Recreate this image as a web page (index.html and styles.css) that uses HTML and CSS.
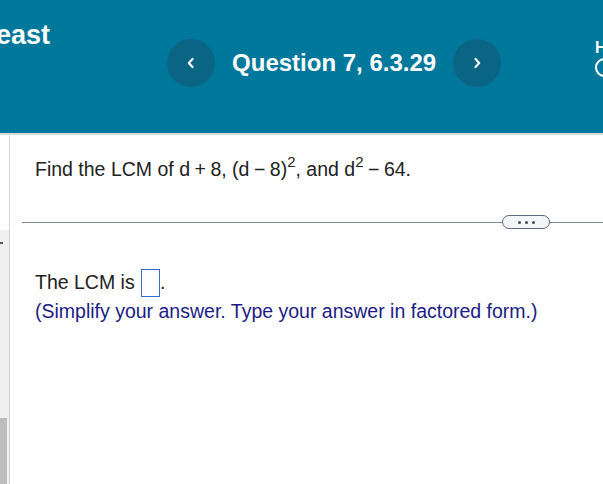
FILE: index.html
```html
<!DOCTYPE html>
<html>
<head>
<meta charset="utf-8">
<link rel="stylesheet" href="styles.css">
</head>
<body>
<header class="header">
  <div class="brand">east</div>
  <nav class="qnav">
    <button class="circle" aria-label="Previous">
      <svg width="14" height="14" viewBox="0 0 14 14"><path d="M8.5 3 L4.8 7 L8.5 11" fill="none" stroke="#fff" stroke-width="2.2" stroke-linecap="round" stroke-linejoin="round"/></svg>
    </button>
    <div class="qtitle">Question 7, 6.3.29</div>
    <button class="circle" aria-label="Next">
      <svg width="14" height="14" viewBox="0 0 14 14"><path d="M5.5 3 L9.2 7 L5.5 11" fill="none" stroke="#fff" stroke-width="2.2" stroke-linecap="round" stroke-linejoin="round"/></svg>
    </button>
  </nav>
  <div class="hright">
    <div class="hw">H</div>
    <div class="ring"></div>
  </div>
</header>
<div class="main">
  <aside class="side">
    <div class="side-top"></div>
    <div class="track">
      <div class="arrow"></div>
      <div class="thumb"></div>
    </div>
  </aside>
  <section class="content">
    <p class="question">Find the LCM of d<span class="op">+</span>8, (d<span class="op">−</span>8)<sup>2</sup>, and d<sup>2</sup><span class="op">−</span>64.</p>
    <div class="divider">
      <span class="line"></span>
      <button class="more" aria-label="More"><i></i><i></i><i></i></button>
      <span class="line tail"></span>
    </div>
    <p class="answer">The LCM is <span class="box"></span>.</p>
    <p class="hint">(Simplify your answer. Type your answer in factored form.)</p>
  </section>
</div>
</body>
</html>
```
FILE: styles.css
```css
html, body {
  margin: 0;
  padding: 0;
  background: #fff;
  font-family: "Liberation Sans", Arial, sans-serif;
  width: 603px;
  height: 484px;
  overflow: hidden;
}

.header {
  height: 133px;
  background: #00789b;
  border-bottom: 2px solid #d6dbe1;
  display: flex;
  align-items: flex-start;
  color: #fff;
}

.brand {
  font-weight: bold;
  font-size: 27px;
  line-height: 30px;
  margin-top: 20px;
  margin-left: -4px;
}

.qnav {
  display: flex;
  align-items: center;
  margin-top: 39px;
  margin-left: 117px;
}

.circle {
  width: 48px;
  height: 48px;
  border-radius: 50%;
  border: none;
  padding: 0;
  background: #0a6484;
  display: flex;
  align-items: center;
  justify-content: center;
}

.qtitle {
  font-weight: bold;
  font-size: 24px;
  margin: 0 17px 0 17px;
  line-height: 30px;
}

.hright {
  margin-left: auto;
  margin-top: 39px;
  width: 8px;
  overflow: hidden;
  display: flex;
  flex-direction: column;
}

.hw {
  font-weight: bold;
  font-size: 16px;
  line-height: 18px;
}

.ring {
  width: 15px;
  height: 15px;
  border: 2px solid #fff;
  border-radius: 50%;
  margin-top: 1px;
}

.main {
  display: flex;
  height: 349px;
}

.side {
  width: 9px;
  border-right: 1px solid #cfd4dc;
  display: flex;
  flex-direction: column;
}

.side-top {
  height: 95px;
}

.track {
  flex: 1;
  background: #f0f0f0;
  display: flex;
  flex-direction: column;
}

.arrow {
  width: 3px;
  height: 2px;
  background: #555;
  margin-top: 12px;
}

.thumb {
  margin-top: auto;
  height: 66px;
  width: 7px;
  background: #bdbdbd;
}

.content {
  flex: 1;
  padding-left: 12px;
  color: #222;
  font-size: 19.5px;
}

.question {
  margin: 22px 0 0 13px;
  line-height: 24px;
}

.op {
  margin: 0 4.5px;
}

sup {
  font-size: 15px;
  line-height: 0;
  vertical-align: 9px;
}

.divider {
  display: flex;
  align-items: center;
  margin-top: 34px;
  height: 14px;
}

.line {
  flex: 1;
  height: 1px;
  background: #7d8a9c;
}

.line.tail {
  flex: 0 0 53px;
}

.more {
  width: 48px;
  height: 14px;
  border: 1px solid #5c6b80;
  border-radius: 7px;
  background: #f3f5f8;
  padding: 0;
  display: flex;
  align-items: center;
  justify-content: center;
  gap: 4px;
}

.more i {
  width: 3px;
  height: 3px;
  border-radius: 50%;
  background: #444c58;
}

.answer {
  margin: 39px 0 0 13px;
  line-height: 28px;
}

.box {
  display: inline-block;
  width: 17px;
  height: 26px;
  border: 1.5px solid #3a6ad0;
  vertical-align: -8px;
  margin-left: 1px;
}

.hint {
  margin: 3px 0 0 13px;
  color: #1c1c86;
  line-height: 22px;
}
```
